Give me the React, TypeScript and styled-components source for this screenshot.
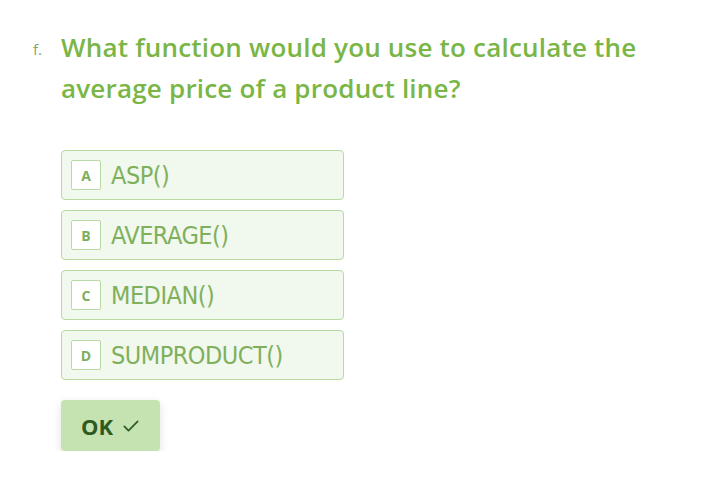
import { FC } from 'react'
import styled, { createGlobalStyle } from 'styled-components'

const Global = createGlobalStyle`
  body {
    margin: 0;
    background: #ffffff;
    font-family: "Open Sans", "Noto Sans", sans-serif;
  }
`

const Page = styled.div`
  padding: 27px 0 0 33px;
`

const Question = styled.div`
  display: flex;
  align-items: flex-start;
`

const Number = styled.span`
  width: 28px;
  padding-top: 12px;
  font-size: 15px;
  color: #7ea85f;
`

const Title = styled.h1`
  margin: 0;
  width: 620px;
  font-size: 26px;
  line-height: 41px;
  font-weight: 600;
  letter-spacing: 0.2px;
  color: #7ab646;
`

const Choices = styled.div`
  display: flex;
  flex-direction: column;
  gap: 10px;
  margin: 41px 0 0 28px;
  width: 283px;
`

const Choice = styled.div`
  display: flex;
  align-items: center;
  gap: 10px;
  height: 50px;
  box-sizing: border-box;
  padding: 0 9px;
  border: 1px solid #b8d9a2;
  border-radius: 4px;
  background: #f1f8ee;
  font-family: "DejaVu Sans Condensed", "Open Sans", sans-serif;
  font-size: 25px;
  color: #80b05c;
  letter-spacing: -0.5px;
`

const Key = styled.span`
  display: flex;
  align-items: center;
  justify-content: center;
  width: 30px;
  height: 30px;
  box-sizing: border-box;
  border: 1px solid #b8d9a2;
  border-radius: 2px;
  background: #ffffff;
  font-family: "Open Sans", sans-serif;
  font-size: 14px;
  font-weight: 700;
  letter-spacing: 0;
  color: #7fae5c;
`

const OkButton = styled.button`
  display: flex;
  align-items: center;
  gap: 8px;
  margin: 20px 0 0 28px;
  height: 51px;
  padding: 0 19px 0 20px;
  border: none;
  border-radius: 4px;
  background: #c5e2b1;
  box-shadow: 0 3px 10px rgba(0, 0, 0, 0.12);
  font-family: inherit;
  font-size: 22px;
  font-weight: 700;
  color: #2e5a1f;
`

const options = [
  { key: 'A', label: 'ASP()' },
  { key: 'B', label: 'AVERAGE()' },
  { key: 'C', label: 'MEDIAN()' },
  { key: 'D', label: 'SUMPRODUCT()' },
]

const App: FC = () => {
  return (
    <Page>
      <Global />
      <Question>
        <Number>f.</Number>
        <Title>What function would you use to calculate the average price of a product line?</Title>
      </Question>
      <Choices>
        {options.map(o => (
          <Choice key={o.key}>
            <Key>{o.key}</Key>
            {o.label}
          </Choice>
        ))}
      </Choices>
      <OkButton>
        OK
        <svg width="20" height="20" viewBox="0 0 24 24" fill="none" stroke="#2e5a1f" strokeWidth="2" strokeLinecap="round" strokeLinejoin="round">
          <path d="M4 12.5l5 5L20 6.5" />
        </svg>
      </OkButton>
    </Page>
  )
}

export default App
